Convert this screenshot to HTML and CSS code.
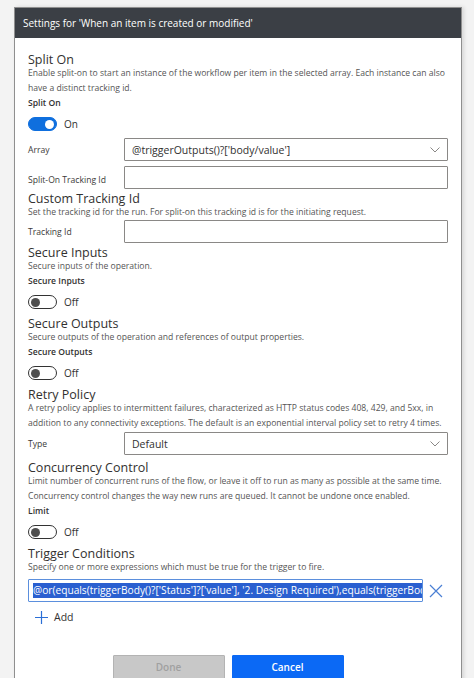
FILE: index.html
```html
<!DOCTYPE html>
<html lang="en">
<head>
    <meta charset="UTF-8">
    <title>Settings</title>
    <link rel="stylesheet" href="styles.css">
</head>
<body>
    <div class="panel">
        <div class="panel-header">Settings for 'When an item is created or modified'</div>

        <div class="panel-body">
            <!-- Split On -->
            <div class="title">Split On</div>
            <div class="desc">Enable split-on to start an instance of the workflow per item in the selected array. Each instance can also<br>have a distinct tracking id.</div>
            <div class="label">Split On</div>
            <div class="toggle-row">
                <span class="toggle on"><span class="knob"></span></span>
                <span class="toggle-text">On</span>
            </div>
            <div class="field">
                <span class="field-label">Array</span>
                <div class="box select">
                    <span>@triggerOutputs()?['body/value']</span>
                    <svg class="chevron" width="10" height="6" viewBox="0 0 10 6"><path d="M0.5 0.5 L5 5 L9.5 0.5" fill="none" stroke="#8a8886" stroke-width="1"/></svg>
                </div>
            </div>
            <div class="field gap">
                <span class="field-label low">Split-On Tracking Id</span>
                <div class="box"></div>
            </div>

            <!-- Custom Tracking Id -->
            <div class="title top-2">Custom Tracking Id</div>
            <div class="desc">Set the tracking id for the run. For split-on this tracking id is for the initiating request.</div>
            <div class="field">
                <span class="field-label">Tracking Id</span>
                <div class="box"></div>
            </div>

            <!-- Secure Inputs -->
            <div class="title top-2">Secure Inputs</div>
            <div class="desc">Secure inputs of the operation.</div>
            <div class="label">Secure Inputs</div>
            <div class="toggle-row">
                <span class="toggle"><span class="knob"></span></span>
                <span class="toggle-text">Off</span>
            </div>

            <!-- Secure Outputs -->
            <div class="title">Secure Outputs</div>
            <div class="desc">Secure outputs of the operation and references of output properties.</div>
            <div class="label">Secure Outputs</div>
            <div class="toggle-row">
                <span class="toggle"><span class="knob"></span></span>
                <span class="toggle-text">Off</span>
            </div>

            <!-- Retry Policy -->
            <div class="title">Retry Policy</div>
            <div class="desc">A retry policy applies to intermittent failures, characterized as HTTP status codes 408, 429, and 5xx, in<br>addition to any connectivity exceptions. The default is an exponential interval policy set to retry 4 times.</div>
            <div class="field top-1">
                <span class="field-label">Type</span>
                <div class="box select">
                    <span>Default</span>
                    <svg class="chevron" width="10" height="6" viewBox="0 0 10 6"><path d="M0.5 0.5 L5 5 L9.5 0.5" fill="none" stroke="#8a8886" stroke-width="1"/></svg>
                </div>
            </div>

            <!-- Concurrency Control -->
            <div class="title top-5">Concurrency Control</div>
            <div class="desc">Limit number of concurrent runs of the flow, or leave it off to run as many as possible at the same time.<br>Concurrency control changes the way new runs are queued. It cannot be undone once enabled.</div>
            <div class="label">Limit</div>
            <div class="toggle-row">
                <span class="toggle"><span class="knob"></span></span>
                <span class="toggle-text">Off</span>
            </div>

            <!-- Trigger Conditions -->
            <div class="title">Trigger Conditions</div>
            <div class="desc">Specify one or more expressions which must be true for the trigger to fire.</div>
            <div class="condition">
                <div class="box focused">
                    <span class="selected">@or(equals(triggerBody()?['Status']?['value'], '2. Design Required'),equals(triggerBody()?['Status']?['value'], '3. Review'))</span>
                </div>
                <svg class="remove" width="14" height="14" viewBox="0 0 14 14"><path d="M1 1 L13 13 M13 1 L1 13" stroke="#4a7fd4" stroke-width="1.2"/></svg>
            </div>
            <div class="add">
                <svg width="13" height="13" viewBox="0 0 13 13"><path d="M6.5 0 V13 M0 6.5 H13" stroke="#2b6fd6" stroke-width="1.2"/></svg>
                <span>Add</span>
            </div>

            <div class="actions">
                <button class="btn done" disabled>Done</button>
                <button class="btn cancel">Cancel</button>
            </div>
        </div>
    </div>
</body>
</html>
```

FILE: styles.css
```css
html, body {
    margin: 0;
    padding: 0;
    background: #f3f3f3;
    font-family: "Open Sans", "Noto Sans", sans-serif;
    color: #323130;
    overflow: hidden;
}
.panel {
    margin: 7px 0 0 14px;
    width: 448px;
    height: 700px;
    box-sizing: border-box;
    background: #fff;
    border: 1px solid #8f8f8f;
    box-shadow: 2px 0 4px rgba(0, 0, 0, 0.12);
}
.panel-header {
    height: 30px;
    line-height: 30px;
    background: #3b3f45;
    color: #fff;
    font-size: 10px;
    padding-left: 8px;
}
.panel-body {
    padding: 14px 13px 0 13px;
}
.title {
    font-size: 12.5px;
    line-height: 12px;
    padding-top: 2px;
    color: #323130;
}
.desc {
    font-size: 8.6px;
    line-height: 15px;
    color: #555;
    white-space: nowrap;
}
.label {
    font-size: 8.6px;
    line-height: 14px;
    font-weight: 600;
    color: #323130;
}
.top-1 { margin-top: 1px; }
.top-2 { margin-top: 2px; }
.top-5 { margin-top: 5px; }

.toggle-row {
    display: flex;
    align-items: center;
    gap: 7px;
    margin: 7px 0;
    height: 14px;
}
.toggle {
    width: 29px;
    height: 14px;
    box-sizing: border-box;
    border: 1px solid #333;
    border-radius: 7px;
    display: flex;
    align-items: center;
    padding: 0 2px;
}
.toggle .knob {
    width: 9px;
    height: 9px;
    border-radius: 50%;
    background: #4f4f4f;
}
.toggle.on {
    background: #0f6fde;
    border-color: #0f6fde;
    justify-content: flex-end;
}
.toggle.on .knob {
    background: #fff;
}
.toggle-text {
    font-size: 10px;
    color: #323130;
}

.field {
    display: flex;
    align-items: center;
}
.field.gap {
    margin-top: 5px;
}
.field-label {
    width: 96px;
    flex: none;
    font-size: 8.6px;
    color: #3b3a39;
}
.field-label.low {
    padding-top: 5px;
}
.box {
    flex: 1;
    height: 23px;
    box-sizing: border-box;
    border: 1px solid #8a8886;
    border-radius: 1px;
    display: flex;
    align-items: center;
    padding: 0 7px;
    font-size: 10.5px;
    color: #323130;
    overflow: hidden;
    white-space: nowrap;
}
.select {
    justify-content: space-between;
}
.chevron {
    flex: none;
}

.condition {
    display: flex;
    align-items: center;
    gap: 6px;
    margin-top: 4px;
    width: 415px;
}
.box.focused {
    border-color: #5b8fdd;
    padding: 0 4px;
    font-size: 10.2px;
}
.selected {
    background: #2a5fd0;
    color: #fff;
    line-height: 15px;
}
.remove {
    flex: none;
}
.add {
    display: flex;
    align-items: center;
    gap: 6px;
    margin-top: 8px;
    padding-left: 7px;
    height: 14px;
    font-size: 10.5px;
    color: #323130;
}
.actions {
    display: flex;
    justify-content: center;
    gap: 7px;
    margin-top: 31px;
    padding-right: 20px;
}
.btn {
    width: 112px;
    height: 24px;
    font-family: inherit;
    font-size: 10px;
    font-weight: 600;
    border: 1px solid transparent;
    border-radius: 1px;
}
.btn.done {
    background: #c8c8c8;
    border-color: #b3b3b3;
    color: #a0a0a0;
}
.btn.cancel {
    background: #0b69f5;
    border-color: #0b69f5;
    color: #fff;
}
```
